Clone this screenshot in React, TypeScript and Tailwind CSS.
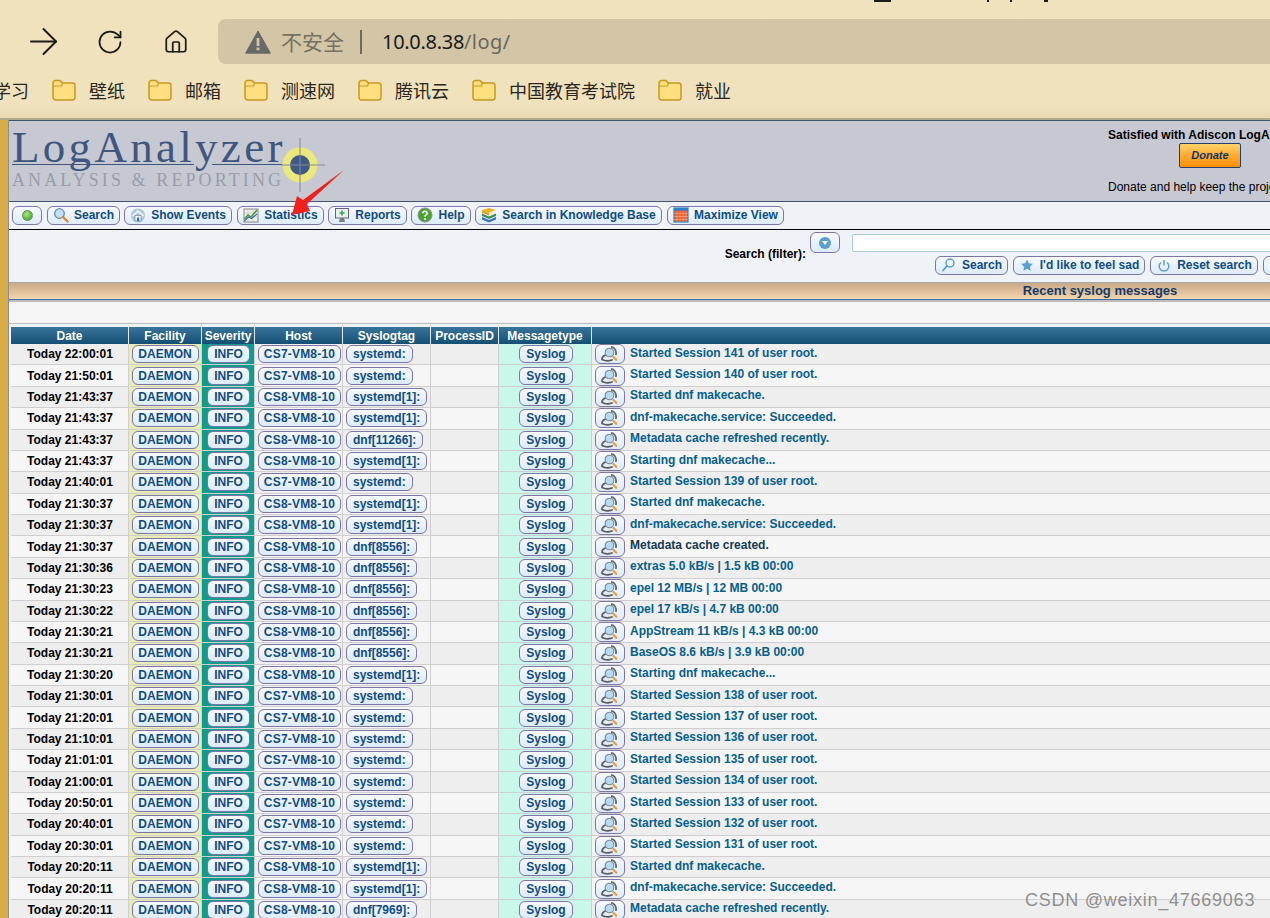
import React from "react";
import { ArrowRight, RotateCw, Home } from "lucide-react";

const FONT = "font-['Liberation_Sans',Arial,sans-serif]";
const CJK = "font-['Noto_Sans_CJK_SC','Noto_Sans',sans-serif]";
const PILL =
  "flex items-center justify-center rounded-[6px] border border-[#7d74a8] bg-gradient-to-b from-[#f7faff] to-[#dcebfb] font-bold text-[#0f4c82] whitespace-nowrap";

type Row = [string, string, string, string, boolean?];
const S7 = "CS7-VM8-10";
const S8 = "CS8-VM8-10";
const rows: Row[] = [
  ["22:00:01", S7, "systemd:", "Started Session 141 of user root."],
  ["21:50:01", S7, "systemd:", "Started Session 140 of user root."],
  ["21:43:37", S8, "systemd[1]:", "Started dnf makecache."],
  ["21:43:37", S8, "systemd[1]:", "dnf-makecache.service: Succeeded."],
  ["21:43:37", S8, "dnf[11266]:", "Metadata cache refreshed recently."],
  ["21:43:37", S8, "systemd[1]:", "Starting dnf makecache..."],
  ["21:40:01", S7, "systemd:", "Started Session 139 of user root."],
  ["21:30:37", S8, "systemd[1]:", "Started dnf makecache."],
  ["21:30:37", S8, "systemd[1]:", "dnf-makecache.service: Succeeded."],
  ["21:30:37", S8, "dnf[8556]:", "Metadata cache created.", true],
  ["21:30:36", S8, "dnf[8556]:", "extras 5.0 kB/s | 1.5 kB 00:00"],
  ["21:30:23", S8, "dnf[8556]:", "epel 12 MB/s | 12 MB 00:00"],
  ["21:30:22", S8, "dnf[8556]:", "epel 17 kB/s | 4.7 kB 00:00"],
  ["21:30:21", S8, "dnf[8556]:", "AppStream 11 kB/s | 4.3 kB 00:00"],
  ["21:30:21", S8, "dnf[8556]:", "BaseOS 8.6 kB/s | 3.9 kB 00:00"],
  ["21:30:20", S8, "systemd[1]:", "Starting dnf makecache..."],
  ["21:30:01", S7, "systemd:", "Started Session 138 of user root."],
  ["21:20:01", S7, "systemd:", "Started Session 137 of user root."],
  ["21:10:01", S7, "systemd:", "Started Session 136 of user root."],
  ["21:01:01", S7, "systemd:", "Started Session 135 of user root."],
  ["21:00:01", S7, "systemd:", "Started Session 134 of user root."],
  ["20:50:01", S7, "systemd:", "Started Session 133 of user root."],
  ["20:40:01", S7, "systemd:", "Started Session 132 of user root."],
  ["20:30:01", S7, "systemd:", "Started Session 131 of user root."],
  ["20:20:11", S8, "systemd[1]:", "Started dnf makecache."],
  ["20:20:11", S8, "systemd[1]:", "dnf-makecache.service: Succeeded."],
  ["20:20:11", S8, "dnf[7969]:", "Metadata cache refreshed recently."],
];

function Folder() {
  return (
    <svg width="24" height="24" viewBox="0 0 24 24" className="shrink-0">
      <path d="M1 5a2.5 2.5 0 0 1 2.5-2.5h4.5l2.5 2.5H20.5a2.5 2.5 0 0 1 2.5 2.5v12a2.5 2.5 0 0 1-2.5 2.5H3.5a2.5 2.5 0 0 1-2.5-2.5z" fill="#ffdf80" stroke="#c8991f" strokeWidth="1.5" />
      <path d="M1 8h8.5l1-3" fill="none" stroke="#c8991f" strokeWidth="1.2" />
    </svg>
  );
}

function Bookmark({ label }: { label: string }) {
  return (
    <div className="flex items-center gap-[12px]">
      <Folder />
      <span className="pl-[1px] text-[18px] leading-6 text-[#2a2720]">{label}</span>
    </div>
  );
}

function Glyph({ kind }: { kind: string }) {
  const box = { width: 16, height: 16, viewBox: "0 0 16 16", className: "shrink-0" };
  switch (kind) {
    case "search":
      return (
        <svg {...box}>
          <circle cx="6.5" cy="6.5" r="4.8" fill="#bfe0f7" stroke="#6a90b0" strokeWidth="1.3" />
          <path d="M10 10l4.5 4.5" stroke="#d98a2b" strokeWidth="2.4" strokeLinecap="round" />
        </svg>
      );
    case "home":
      return (
        <svg {...box}>
          <circle cx="8" cy="8.5" r="7" fill="#a9c7de" />
          <path d="M2.5 9L8 4l5.5 5" fill="none" stroke="#f2f5f8" strokeWidth="1.8" />
          <rect x="5" y="8.5" width="6" height="5.5" fill="#f8f8f2" stroke="#66809a" strokeWidth=".6" />
          <rect x="7" y="10.5" width="2.2" height="3.5" fill="#2f6da3" />
        </svg>
      );
    case "stats":
      return (
        <svg {...box}>
          <rect x="1" y="2" width="14" height="13" fill="#f1f1ea" stroke="#6d6d6d" strokeWidth=".8" />
          <path d="M1 6h14M1 10h14M5 2v13M10 2v13" stroke="#b9b9b9" strokeWidth=".6" />
          <path d="M1.5 12L5 8l3 2 6-7" fill="none" stroke="#3f9a3a" strokeWidth="1.5" />
          <path d="M1.5 14l4-4 3 1.5L14 7" fill="none" stroke="#3f6aa8" strokeWidth="1.1" />
        </svg>
      );
    case "reports":
      return (
        <svg {...box}>
          <rect x="1.5" y="1.5" width="13" height="9.5" fill="#e9eef2" stroke="#62686e" strokeWidth="1" />
          <path d="M8 3.5v5M5.5 6h5" fill="none" stroke="#46a33e" strokeWidth="1.6" />
          <path d="M6 11h4l1 4H5z" fill="#787c80" />
        </svg>
      );
    case "help":
      return (
        <svg {...box}>
          <circle cx="8" cy="8" r="7" fill="#4aa52e" stroke="#8b8f92" strokeWidth="1" />
          <path d="M5.8 6.2a2.2 2 0 1 1 3.4 1.7c-.8.5-1.2.9-1.2 1.8" fill="none" stroke="#fff" strokeWidth="1.6" />
          <circle cx="8" cy="12" r="1" fill="#fff" />
        </svg>
      );
    case "kb":
      return (
        <svg {...box}>
          <path d="M1 3l7-2 7 2-7 3z" fill="#e6b422" />
          <path d="M1 3l7 3v2.5L1 5.5z" fill="#d8a018" />
          <path d="M1 6.5l7 3 7-3v2.5l-7 3-7-3z" fill="#3f8f55" />
          <path d="M1 10l7 3 7-3v2.5L8 15.5 1 12.5z" fill="#3a74b8" />
          <path d="M8 6l7-3v3l-7 3z" fill="#f4f0e0" />
        </svg>
      );
    case "max":
      return (
        <svg {...box}>
          <rect x="1" y="1" width="14" height="14" fill="#f0592b" stroke="#2a86c8" strokeWidth="1.2" />
          <rect x="1" y="1" width="14" height="2.6" fill="#2a86c8" />
          <path d="M4 4v11M7 4v11M10 4v11M13 4v11M1 6.5h14M1 9.5h14M1 12.5h14" stroke="#f7b08c" strokeWidth=".6" />
        </svg>
      );
    case "find":
      return (
        <svg {...box}>
          <circle cx="9" cy="6" r="4" fill="none" stroke="#5a9fd0" strokeWidth="1.5" />
          <path d="M6 9l-4 4.5" stroke="#5a9fd0" strokeWidth="1.8" strokeLinecap="round" />
        </svg>
      );
    case "star":
      return (
        <svg {...box}>
          <path d="M8 2.5l1.8 3.8 4.2.5-3.1 2.9.8 4.1L8 11.8l-3.7 2 .8-4.1L2 6.8l4.2-.5z" fill="#5a9fd0" />
        </svg>
      );
    case "power":
      return (
        <svg {...box}>
          <path d="M5 5.5a4.8 4.8 0 1 0 6 0" fill="none" stroke="#5a9fd0" strokeWidth="1.5" />
          <path d="M8 3v5.5" stroke="#5a9fd0" strokeWidth="1.5" />
        </svg>
      );
    default:
      return null;
  }
}

function ToolBtn({ icon, label, w, ml }: { icon: string; label: string; w: string; ml: string }) {
  return (
    <div className={`${PILL} ${w} ${ml} h-[19px] shrink-0 gap-[5px] text-[12px]`}>
      <Glyph kind={icon} />
      <span>{label}</span>
    </div>
  );
}

function LogIcon() {
  return (
    <svg width="22" height="18" viewBox="0 0 22 18">
      <path d="M3 14c0-2 2-3.5 4.5-4.500M3 14.500c3 1.500 7 1.500 10 .5" fill="none" stroke="#5c5c5c" strokeWidth="1.8" strokeLinecap="round" />
      <path d="M12 2c3.500 0 5.500 3 5 8" fill="none" stroke="#6a6a6a" strokeWidth="1.8" />
      <circle cx="10.500" cy="7.500" r="4.300" fill="#b5dcf3" stroke="#7d8a94" strokeWidth="1.100" />
      <path d="M14.500 12l2.800 2.800" stroke="#ea9a3c" strokeWidth="2.200" strokeLinecap="round" />
    </svg>
  );
}

function HeaderCell({ w, label }: { w: string; label: string }) {
  return (
    <div className={`${w} flex shrink-0 items-center justify-center border-r border-[#e4e8ec] bg-gradient-to-b from-[#39749a] to-[#134f74] text-[12px] font-bold text-white`}>
      {label}
    </div>
  );
}

function LogRow({ row, index }: { row: Row; index: number }) {
  const [time, host, tag, message, dark] = row;
  const odd = index % 2 === 0;
  return (
    <div className={`flex h-[21.38px] border-b border-[#cfcfcf] text-[12px] ${odd ? "bg-[#eeeeee]" : "bg-[#f6f6f6]"}`}>
      <div className="flex w-[118px] shrink-0 items-center justify-center border-r border-[#cfcfcf] pl-[1px] font-bold text-black">Today {time}</div>
      <div className="flex w-[73px] shrink-0 items-center justify-center border-r border-[#cfcfcf] bg-[#e9edb4]">
        <div className={`${PILL} h-[18px] w-[67px]`}>DAEMON</div>
      </div>
      <div className="flex w-[53px] shrink-0 items-center border-r border-[#cfcfcf] bg-[#109c8c] pl-[5px]">
        <div className={`${PILL} h-[18px] w-[43px]`}>INFO</div>
      </div>
      <div className="flex w-[88px] shrink-0 items-center border-r border-[#cfcfcf] pl-[3px]">
        <div className={`${PILL} h-[18px] w-[83px] tracking-[0.2px]`}>{host}</div>
      </div>
      <div className="flex w-[88px] shrink-0 items-center border-r border-[#cfcfcf] pl-[3px]">
        <div className={`${PILL} h-[18px] px-[6px]`}>{tag}</div>
      </div>
      <div className="w-[68px] shrink-0 border-r border-[#cfcfcf]" />
      <div className="flex w-[93px] shrink-0 items-center border-r border-[#cfcfcf] bg-[#c9f7e9] pl-[20px]">
        <div className={`${PILL} h-[18px] w-[54px]`}>Syslog</div>
      </div>
      <div className="flex flex-1 items-center pl-[3px]">
        <div className={`${PILL} h-[20px] w-[30px] shrink-0`}>
          <LogIcon />
        </div>
        <span className={`-mt-[3px] ml-[5px] whitespace-nowrap font-bold ${dark ? "text-[#123a52]" : "text-[#05608e]"}`}>{message}</span>
      </div>
    </div>
  );
}

export default function App() {
  return (
    <div className={`relative h-[918px] w-[1270px] overflow-hidden bg-[#f0e2bd] ${FONT}`}>
      {/* Browser chrome */}
      <div className="h-[118px] bg-gradient-to-b from-[#f0e2bd] from-90% to-[#e7d9b4] pt-[19px]">
        <div className="flex h-[45px] items-center">
          <div className="flex w-[218px] shrink-0 items-center pl-[22px] text-[#1c1a16]">
            <ArrowRight size={43} strokeWidth={1.1} />
            <RotateCw size={28} strokeWidth={1.5} className="ml-[31px]" />
            <Home size={26} strokeWidth={1.6} className="ml-[39px]" />
          </div>
          <div className={`flex h-[45px] flex-1 items-center rounded-l-[8px] bg-[#d3c6a6] pl-[27px] ${CJK}`}>
            <svg width="26" height="24" viewBox="0 0 26 24">
              <path d="M13 1.500L25 23H1z" fill="#696969" stroke="#696969" strokeLinejoin="round" strokeWidth="1.500" />
              <rect x="11.600" y="8" width="2.800" height="8" fill="#d3c6a6" />
              <rect x="11.600" y="17.500" width="2.800" height="2.800" fill="#d3c6a6" />
            </svg>
            <span className="ml-[10px] text-[21px] text-[#75705f]">不安全</span>
            <span className="ml-[16px] h-[24px] w-[2px] bg-[#6f6a5c]" />
            <span className="ml-[20px] font-['Noto_Sans',sans-serif] text-[20px] tracking-[-0.3px] text-[#1b1a16]">
              10.0.8.38<span className="tracking-[0.4px] text-[#6a665a]">/log/</span>
            </span>
          </div>
        </div>
        <div className={`mt-[14px] flex h-[24px] items-center gap-[23px] pl-[53px] ${CJK}`}>
          <span className="-ml-[60px] w-[36px] text-[18px] leading-6 text-[#2a2720]">学习</span>
          <Bookmark label="壁纸" />
          <Bookmark label="邮箱" />
          <Bookmark label="测速网" />
          <Bookmark label="腾讯云" />
          <Bookmark label="中国教育考试院" />
          <Bookmark label="就业" />
        </div>
      </div>

      {/* Page */}
      <div className="flex h-[800px] bg-[#b3ab8d] pt-[2px]">
        <div className="w-[8px] shrink-0 bg-[#d8ad48]" />
        <div className="min-w-0 flex-1 overflow-hidden border-l border-[#8d8d8d] bg-[#eff2f7]">
          {/* Header */}
          <div className="flex h-[82px] w-[1400px] border-y border-[#40566e] bg-[#c6c9d2]">
            <div className="relative w-[1099px] shrink-0 pl-[3px] pt-[1px]">
              <div className="font-['Liberation_Serif',serif] text-[45px] leading-[50px] tracking-[3.3px] text-[#3f567f]">LogAnalyzer</div>
              <div className="-mt-[2px] font-['Liberation_Serif',serif] text-[18px] leading-[20px] tracking-[3.1px] text-[#989daa]">ANALYSIS &amp; REPORTING</div>
              <svg width="320" height="54" viewBox="0 0 320 54" className="absolute left-0 top-[17px]">
                <path d="M3 26.500h182M203 26.500h70" stroke="#3f567f" strokeWidth="1" />
                <circle cx="291" cy="27" r="17.500" fill="#ece87c" />
                <circle cx="291" cy="27" r="10" fill="#3f5a86" />
                <path d="M291 0v54M272 27h44" stroke="#7f8899" strokeWidth="1" />
              </svg>
            </div>
            <div className="w-[204px] shrink-0 pt-[7px] text-[12px] text-black">
              <div className="whitespace-nowrap font-bold leading-[14px]">Satisfied with Adiscon LogAnalyzer?</div>
              <div className="mx-auto mt-[1px] flex h-[25px] w-[62px] items-center justify-center rounded-[2px] border border-[#24406a] bg-gradient-to-b from-[#ffd36a] via-[#ffab2b] to-[#f98f06] text-[11px] font-bold italic text-[#12346d]">Donate</div>
              <div className="mt-[12px] whitespace-nowrap leading-[14px]">Donate and help keep the project alive!</div>
            </div>
          </div>

          {/* Toolbar */}
          <div className="flex h-[28px] items-center border-b border-black pb-[1px] pl-[3px]">
            <div className={`${PILL} h-[19px] w-[30px] shrink-0`}>
              <span className="h-[11px] w-[11px] rounded-full border border-[#5f8f5f] bg-[radial-gradient(circle_at_40%_35%,#a8e878,#2f9a1e)]" />
            </div>
            <ToolBtn icon="search" label="Search" w="w-[73px]" ml="ml-[5px]" />
            <ToolBtn icon="home" label="Show Events" w="w-[108px]" ml="ml-[4px]" />
            <ToolBtn icon="stats" label="Statistics" w="w-[87px]" ml="ml-[5px]" />
            <ToolBtn icon="reports" label="Reports" w="w-[79px]" ml="ml-[4px]" />
            <ToolBtn icon="help" label="Help" w="w-[60px]" ml="ml-[4px]" />
            <ToolBtn icon="kb" label="Search in Knowledge Base" w="w-[187px]" ml="ml-[4px]" />
            <ToolBtn icon="max" label="Maximize View" w="w-[117px]" ml="ml-[5px]" />
          </div>

          {/* Search */}
          <div className="h-[52px] w-[1400px]">
            <div className="flex h-[24px] items-start pt-[2px]">
              <div className="w-[797px] shrink-0 pt-[15px] text-right text-[12px] font-bold leading-[14px] text-black">Search (filter):</div>
              <div className={`${PILL} ml-[4px] h-[21px] w-[30px]`}>
                <span className="flex h-[12px] w-[12px] items-center justify-center rounded-full bg-[#5a9fd0]">
                  <span className="h-0 w-0 border-x-[3px] border-t-[4px] border-x-transparent border-t-white" />
                </span>
              </div>
              <div className="ml-[12px] mt-[2px] h-[18px] flex-1 rounded-[2px] border border-[#a8cbe4] bg-white" />
            </div>
            <div className="mt-[1px] flex h-[20px] items-center pl-[926px]">
              <ToolBtn icon="find" label="Search" w="w-[73px]" ml="ml-0" />
              <ToolBtn icon="star" label="I'd like to feel sad" w="w-[132px]" ml="ml-[5px]" />
              <ToolBtn icon="power" label="Reset search" w="w-[108px]" ml="ml-[5px]" />
              <div className={`${PILL} ml-[5px] h-[19px] w-[80px]`} />
            </div>
          </div>

          {/* Section title */}
          <div className="h-[18px] w-[2182px] border-b border-t border-b-[#3f6fa5] border-t-[#a7a9ab] bg-gradient-to-b from-[#c9a987] to-[#f4d6ae] text-center text-[13px] font-bold leading-[16px] text-[#153a68]">
            Recent syslog messages
          </div>
          <div className="h-[24px] border-b border-t-2 border-b-[#bcbcbc] border-t-[#bcbcbc] bg-[#f5f5f5]" />

          {/* Table */}
          <div className="ml-[2px] mt-[3px]">
            <div className="flex h-[17px]">
              <HeaderCell w="w-[118px]" label="Date" />
              <HeaderCell w="w-[73px]" label="Facility" />
              <HeaderCell w="w-[53px]" label="Severity" />
              <HeaderCell w="w-[88px]" label="Host" />
              <HeaderCell w="w-[88px]" label="Syslogtag" />
              <HeaderCell w="w-[68px]" label="ProcessID" />
              <HeaderCell w="w-[93px]" label="Messagetype" />
              <div className="flex-1 bg-gradient-to-b from-[#39749a] to-[#134f74]" />
            </div>
            {rows.map((row, i) => (
              <LogRow key={i} row={row} index={i} />
            ))}
          </div>
        </div>
      </div>

      {/* Clipped tab glyphs at the very top edge */}
      <div className="absolute left-[874px] top-0 flex h-[2px] items-start">
        <span className="h-[2px] w-[17px] bg-[#1c1a16]" />
        <span className="ml-[96px] h-[2px] w-[2px] bg-[#1c1a16]" />
        <span className="ml-[21px] h-[2px] w-[2px] bg-[#1c1a16]" />
        <span className="ml-[32px] h-[2px] w-[4px] bg-[#1c1a16]" />
      </div>

      {/* Annotation arrow */}
      <svg width="70" height="60" viewBox="0 0 70 60" className="absolute left-[285px] top-[165px]">
        <path d="M59 5L22 39l3 7-18 4 5-19 6 4z" fill="#f0201c" />
      </svg>

      {/* Watermark */}
      <div className="absolute left-[1025px] top-[889px] text-[18px] leading-[22px] tracking-[0.75px] text-[#909090]">CSDN @weixin_47669063</div>
    </div>
  );
}
